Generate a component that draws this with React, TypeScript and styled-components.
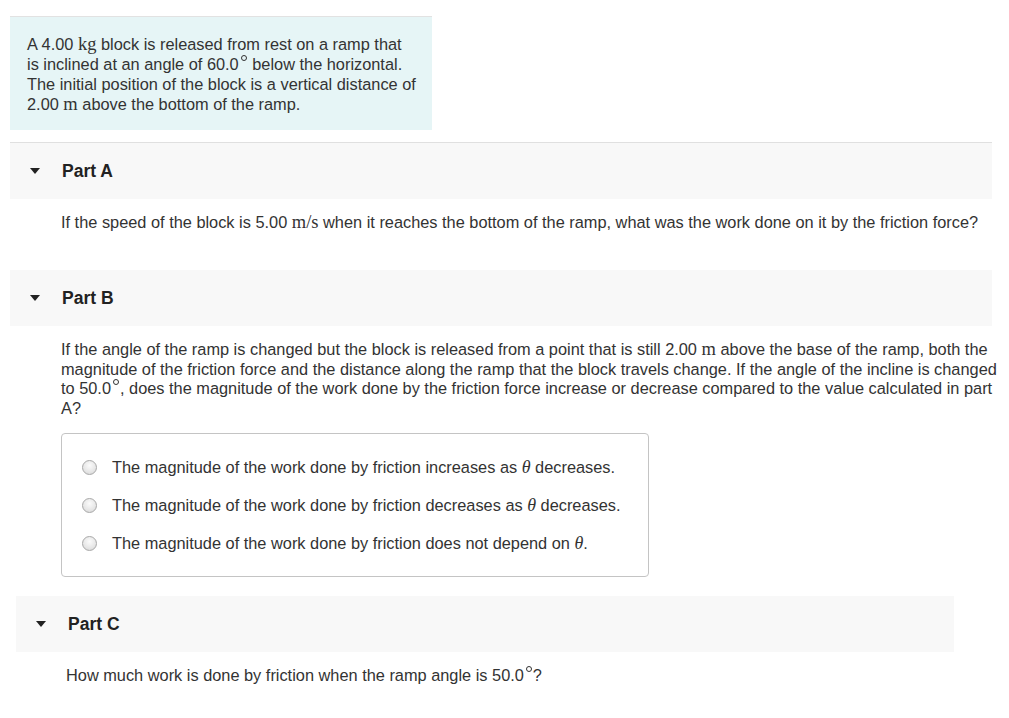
import styled, { createGlobalStyle } from "styled-components";

const GlobalStyle = createGlobalStyle`
    body {
        margin: 0;
        background: #ffffff;
        font-family: "Liberation Sans", Arial, sans-serif;
        color: #333333;
    }
`;

const Page = styled.div`
    padding: 16px 17px 20px 10px;
    width: 982px;
`;

const Intro = styled.div`
    width: 422px;
    box-sizing: border-box;
    background: #e6f5f6;
    border-top: 1px solid #e2e2e2;
    padding: 17px 8px 16px 17px;
    font-size: 16.35px;
    line-height: 20px;
    white-space: nowrap;
`;

const PartSection = styled.section<{ $indent?: number; $width?: number; $top?: number }>`
    margin-left: ${(p) => p.$indent ?? 0}px;
    margin-top: ${(p) => p.$top ?? 0}px;
    width: ${(p) => (p.$width ? `${p.$width}px` : "auto")};
`;

const PartHeader = styled.div<{ $ruled?: boolean }>`
    display: flex;
    align-items: center;
    gap: 22px;
    height: 56px;
    padding-left: 20px;
    background: #f8f8f8;
    border-top: ${(p) => (p.$ruled ? "1px solid #e0e0e0" : "none")};
    font-size: 17.5px;
    font-weight: bold;
    color: #222;
`;

const Caret = styled.span`
    width: 0;
    height: 0;
    border-left: 5px solid transparent;
    border-right: 5px solid transparent;
    border-top: 6px solid #222;
`;

const PartBody = styled.div<{ $indent: number; $top: number; $bottom: number }>`
    padding: ${(p) => p.$top}px 0 ${(p) => p.$bottom}px ${(p) => p.$indent}px;
    margin-right: -12px;
    font-size: 16.35px;
    line-height: 19.4px;
`;

const Math = styled.span`
    font-family: "Liberation Serif", "Times New Roman", serif;
    font-size: 18.5px;
    line-height: 1;
`;

const MathItalic = styled(Math)`
    font-style: italic;
    font-size: 18px;
`;

/* superscript ring used for degrees */
const Deg = styled.span`
    display: inline-block;
    width: 4px;
    height: 4px;
    border: 1px solid currentColor;
    border-radius: 50%;
    margin: 0 1px 0 2px;
    vertical-align: 9px;
`;

const Choices = styled.div`
    margin-top: 15px;
    width: 588px;
    box-sizing: border-box;
    border: 1px solid #c4c4c4;
    border-radius: 4px;
    padding: 24px 0 23px 20px;
    display: flex;
    flex-direction: column;
    gap: 19px;
`;

const Choice = styled.label`
    display: flex;
    align-items: center;
    gap: 15px;
    font-size: 16.35px;
    line-height: 19px;
    height: 19px;
`;

const Radio = styled.span`
    width: 13px;
    height: 13px;
    border-radius: 50%;
    border: 1px solid #a8a8a8;
    background: radial-gradient(circle at 50% 35%, #fbfbfb 0%, #e6e6e6 60%, #d2d2d2 100%);
    flex-shrink: 0;
`;

const options = [
    <>The magnitude of the work done by friction increases as <MathItalic>θ</MathItalic> decreases.</>,
    <>The magnitude of the work done by friction decreases as <MathItalic>θ</MathItalic> decreases.</>,
    <>The magnitude of the work done by friction does not depend on <MathItalic>θ</MathItalic>.</>,
];

export default function App() {
    return (
        <>
            <GlobalStyle />
            <Page>
                <Intro>
                    A 4.00 <Math>kg</Math> block is released from rest on a ramp that
                    <br />
                    is inclined at an angle of 60.0<Deg /> below the horizontal.
                    <br />
                    The initial position of the block is a vertical distance of
                    <br />
                    2.00 <Math>m</Math> above the bottom of the ramp.
                </Intro>

                <PartSection $top={12}>
                    <PartHeader $ruled>
                        <Caret />
                        Part A
                    </PartHeader>
                    <PartBody $indent={51} $top={14} $bottom={38}>
                        If the speed of the block is 5.00 <Math>m/s</Math> when it reaches the bottom of the ramp, what
                        was the work done on it by the friction force?
                    </PartBody>
                </PartSection>

                <PartSection>
                    <PartHeader>
                        <Caret />
                        Part B
                    </PartHeader>
                    <PartBody $indent={51} $top={14} $bottom={19}>
                        If the angle of the ramp is changed but the block is released from a point that is still 2.00{" "}
                        <Math>m</Math> above the base of the ramp, both the magnitude of the friction force and the
                        distance along the ramp that the block travels change. If the angle of the incline is changed
                        to 50.0<Deg />, does the magnitude of the work done by the friction force increase or
                        decrease compared to the value calculated in part A?
                        <Choices>
                            {options.map((o, i) => (
                                <Choice key={i}>
                                    <Radio />
                                    <span>{o}</span>
                                </Choice>
                            ))}
                        </Choices>
                    </PartBody>
                </PartSection>

                <PartSection $indent={6} $width={938}>
                    <PartHeader>
                        <Caret />
                        Part C
                    </PartHeader>
                    <PartBody $indent={50} $top={14} $bottom={20}>
                        How much work is done by friction when the ramp angle is 50.0<Deg />?
                    </PartBody>
                </PartSection>
            </Page>
        </>
    );
}
